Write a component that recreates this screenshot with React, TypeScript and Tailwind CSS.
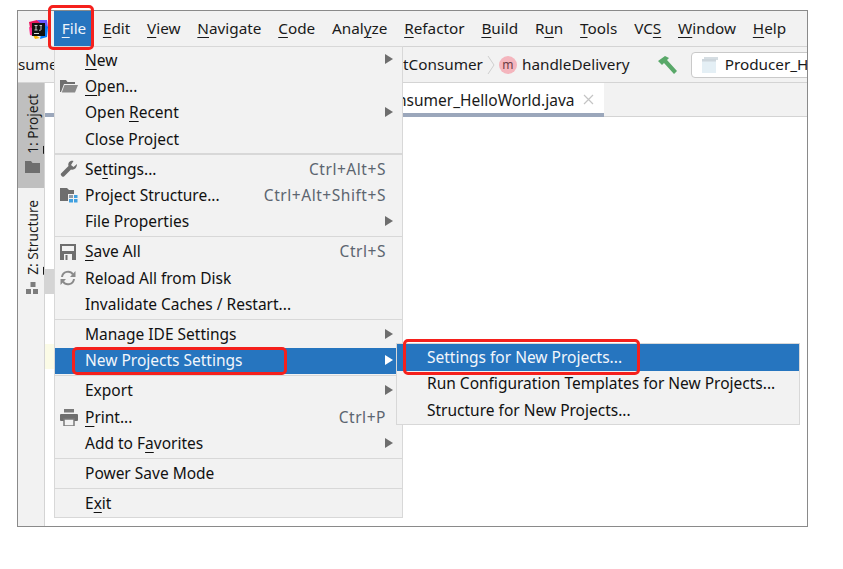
import React from "react";

function U({ c }: { c: string }) {
  return <span className="underline decoration-1 underline-offset-[3px]">{c}</span>;
}

function Row({
  children,
  icon,
  shortcut,
  arrow,
  active,
}: {
  children: React.ReactNode;
  icon?: React.ReactNode;
  shortcut?: string;
  arrow?: boolean;
  active?: boolean;
}) {
  return (
    <div
      className={`flex h-[26.33px] items-center whitespace-nowrap pl-[5px] ${arrow ? "pr-[9px]" : "pr-[16px]"} ${
        active ? "bg-[#2675bf] text-[#f2f6fb]" : "text-[#111111]"
      }`}
    >
      <span className="flex w-[25px] shrink-0 items-center justify-start">{icon}</span>
      <span className="flex-1">{children}</span>
      {shortcut && <span className="tracking-[0.55px] text-[#5c6570]">{shortcut}</span>}
      {arrow && (
        <svg width="8" height="10" viewBox="0 0 8 10" className="-mt-[2px] shrink-0">
          <path d="M0 0 L8 5 L0 10Z" fill={active ? "#ffffff" : "#6e6e6e"} />
        </svg>
      )}
    </div>
  );
}

function Sep({ thick }: { thick?: boolean }) {
  return (
    <div className="flex h-[3.7px] items-center">
      <div className={`w-full bg-[#d8d8d8] ${thick ? "h-[2px]" : "h-[1px]"}`} />
    </div>
  );
}

const Logo = () => (
  <svg width="20" height="20" viewBox="0 0 20 20">
    <path d="M1 3 L9 1 L13 4 L6 10 L2 9Z" fill="#e8175d" />
    <path d="M9 1 L19 1 L20 9 L14 6Z" fill="#6b57ff" />
    <path d="M15 5 L20 8 L19 18 L12 20Z" fill="#087cfa" />
    <path d="M1 8 L7 10 L6 17 L2 16Z" fill="#ff318c" />
    <path d="M4 14 L12 19 L7 20Z" fill="#fdb60d" />
    <rect x="4" y="4" width="13" height="13" fill="#111" />
    <rect x="6" y="14" width="5" height="1" fill="#ddd" />
    <path d="M6.5 6.5h3M8 6.5v4.5M6.5 11h3M11.5 6.5h2.5M13 6.5v4c0 .7-.8 1-2 .7" stroke="#ddd" strokeWidth="0.9" fill="none" />
  </svg>
);

const menuItems: [string, number][] = [
  ["Edit", 0],
  ["View", 0],
  ["Navigate", 0],
  ["Code", 0],
  ["Analyze", 4],
  ["Refactor", 0],
  ["Build", 0],
  ["Run", 1],
  ["Tools", 0],
  ["VCS", 2],
  ["Window", 0],
  ["Help", 0],
];

export default function App() {
  return (
    <div className="relative h-[569px] w-[843px] overflow-hidden bg-white pl-[17px] pt-[10px] font-['Noto_Sans','Open_Sans',sans-serif] text-[15.3px]">
      {/* Window */}
      <div className="flex h-[517px] w-[791px] flex-col overflow-hidden border border-[#8a8a8a] bg-white">
        {/* Menu bar */}
        <div className="flex h-[36px] shrink-0 items-stretch border-b border-[#d4d4d4] bg-[#f2f2f2] text-[#1a1a1a]">
          <span className="flex w-[36px] items-center justify-center pl-[4px]"><Logo /></span>
          <div className="flex w-[40px] items-center justify-center bg-[#2675bf] text-[#eef4fa]">
            <span><U c="F" />ile</span>
          </div>
          <div className="flex items-center pl-[0.5px] whitespace-nowrap">
            {menuItems.map(([t, i]) => (
              <span key={t} className="px-[8.4px]">
                {t.slice(0, i)}
                <U c={t[i]} />
                {t.slice(i + 1)}
              </span>
            ))}
          </div>
        </div>
        {/* Breadcrumb */}
        <div className="flex h-[36px] shrink-0 items-center overflow-hidden whitespace-nowrap border-b border-[#d4d4d4] bg-[#f2f2f2] text-[#1a1a1a]">
          <span className="w-[385px] shrink-0">sume</span>
          <span className="shrink-0">tConsumer</span>
          <svg width="8" height="20" viewBox="0 0 8 20" className="ml-[4px] shrink-0">
            <path d="M1 1 L7 10 L1 19" stroke="#cfcfcf" fill="none" />
          </svg>
          <span className="ml-[4px] flex h-[18px] w-[18px] shrink-0 items-center justify-center rounded-full bg-[#f4b5bd] text-[12px] leading-none text-[#6b3b44]">m</span>
          <span className="ml-[5px] shrink-0">handleDelivery</span>
          <svg width="22" height="20" viewBox="0 0 22 20" className="ml-[27px] shrink-0">
            <path d="M1 6 L8 1 L12 3 L10 5 L20 16 L17 19 L7 8 L5 10Z" fill="#59a869" />
          </svg>
          <div className="ml-[12px] flex h-[26px] w-[140px] shrink-0 items-center rounded-[4px] border border-[#c9c9c9] bg-white pl-[9px]">
            <svg width="18" height="18" viewBox="0 0 18 18" className="shrink-0">
              <rect x="3" y="1" width="14" height="3" fill="#d5dde2" />
              <rect x="1" y="3" width="14" height="14" fill="#e4eff5" />
              <rect x="1" y="3" width="14" height="2.5" fill="#cdd6dc" />
            </svg>
            <span className="ml-[6px]">Producer_H</span>
          </div>
        </div>
        {/* Body */}
        <div className="flex min-h-0 flex-1">
          {/* Left tool strip */}
          <div className="w-[27px] shrink-0 border-r border-[#d4d4d4] bg-[#f2f2f2] text-[13.7px] text-[#1a1a1a]">
            <div className="flex h-[105px] flex-col items-center bg-[#bfbfbf] pl-[3px] pt-[11px]">
              <span className="rotate-180 leading-none [writing-mode:vertical-rl]">
                <U c="1" />: Project
              </span>
              <svg width="15" height="12" viewBox="0 0 15 12" className="mt-[7px]">
                <path d="M0 0 H6 L7.5 2 H15 V12 H0Z" fill="#6e6e6e" />
              </svg>
            </div>
            <div className="flex flex-col items-center pl-[3px] pt-[12px]">
              <span className="rotate-180 leading-none [writing-mode:vertical-rl]">
                <U c="Z" />: Structure
              </span>
              <svg width="14" height="12" viewBox="0 0 14 12" className="mt-[7px]">
                <rect x="4.5" y="0" width="5" height="5" fill="#7d7d7d" />
                <rect x="0" y="7" width="5" height="5" fill="#7d7d7d" />
                <rect x="7" y="7" width="5" height="5" fill="#7d7d7d" />
              </svg>
            </div>
          </div>
          {/* Editor */}
          <div className="flex min-w-0 flex-1 flex-col">
            <div className="flex h-[34px] shrink-0 border-b border-[#d4d4d4] bg-[#f2f2f2]">
              <div className="flex h-[34px] w-[559px] items-center whitespace-nowrap border-b-[4px] border-[#9ba7bb] bg-white pl-[352px] pt-[5px] text-[15.5px] text-[#1a1a1a]">
                <span>nsumer_HelloWorld.java</span>
                <svg width="12" height="12" viewBox="0 0 12 12" className="-mt-[2px] ml-[8px]">
                  <path d="M1 1 L10 10 M10 1 L1 10" stroke="#c4c4c4" strokeWidth="1.2" />
                </svg>
              </div>
            </div>
            <div className="flex-1 bg-white">
              <div className="w-[9px] pt-[152px]">
                <div className="h-[25px] bg-[#d4d4d4]" />
                <div className="mt-[50px] h-[25px] bg-[#fbfbe6]" />
              </div>
            </div>
          </div>
        </div>
      </div>

      {/* File menu */}
      <div className="absolute left-[54px] top-[46px] w-[349px] border border-[#d8d8d8] bg-[#f2f2f2] text-[15.5px]">
        <Row arrow><U c="N" />ew</Row>
        <Row icon={
          <svg width="18" height="14" viewBox="0 0 18 14"><path d="M0 1 H6 L7.5 3 H15 V5 H4 L1 13 H0Z" fill="#6e6e6e" /><path d="M4.5 6 H18 L15 13.5 H1.8Z" fill="#8a8a8a" /></svg>
        }><U c="O" />pen...</Row>
        <Row arrow>Open <U c="R" />ecent</Row>
        <Row>Close Project</Row>
        <Sep thick />
        <Row shortcut="Ctrl+Alt+S" icon={
          <svg width="18" height="18" viewBox="0 0 18 18"><path d="M17 4 L13.5 7 L11 5 L13.5 1 C10 0 7.5 3 8.5 6 L1 13.5 C0 15 2.5 17.5 4 16.5 L11 9.5 C14 10.5 17 8 17 4Z" fill="#6e6e6e" /></svg>
        }>Se<U c="t" />tings...</Row>
        <Row shortcut="Ctrl+Alt+Shift+S" icon={
          <svg width="18" height="16" viewBox="0 0 18 16"><path d="M0 1 H7 L9 3 H14 V7 H8 V14 H0Z" fill="#6e6e6e" /><rect x="9" y="8" width="4" height="3" fill="#8e9aa6" /><rect x="14" y="8" width="3.5" height="3" fill="#40a0e0" /><rect x="9" y="12" width="4" height="3.5" fill="#40a0e0" /><rect x="14" y="12" width="3.5" height="3.5" fill="#40a0e0" /></svg>
        }>Project Structure...</Row>
        <Row arrow>File Properties</Row>
        <Sep />
        <Row shortcut="Ctrl+S" icon={
          <svg width="16" height="16" viewBox="0 0 16 16"><path d="M0 0 H16 V16 H0Z" fill="#6e6e6e" /><rect x="2" y="2" width="12" height="5" fill="#f2f2f2" /><rect x="4" y="10" width="8" height="6" fill="#f2f2f2" /><rect x="5.5" y="11" width="2" height="5" fill="#6e6e6e" /></svg>
        }><U c="S" />ave All</Row>
        <Row icon={
          <svg width="16" height="16" viewBox="0 0 16 16" fill="none" stroke="#8a8a8a" strokeWidth="2"><path d="M2 7 A6 6 0 0 1 13 4.5" /><path d="M14 9 A6 6 0 0 1 3 11.5" /><path d="M15.5 1 V7 H10Z" fill="#8a8a8a" stroke="none" /><path d="M0.5 15 V9 H6Z" fill="#8a8a8a" stroke="none" /></svg>
        }>Reload All from Disk</Row>
        <Row>Invalidate Caches / Restart...</Row>
        <Sep />
        <Row arrow>Manage IDE Settings</Row>
        <Row arrow active>New Projects Settings</Row>
        <Sep />
        <Row arrow>Export</Row>
        <Row shortcut="Ctrl+P" icon={
          <svg width="18" height="17" viewBox="0 0 18 17"><rect x="4" y="0" width="10" height="3.5" fill="#7a7a7a" /><rect x="0" y="5" width="18" height="7" rx="1" fill="#6e6e6e" /><rect x="4" y="10" width="10" height="7" fill="#f2f2f2" stroke="#7a7a7a" strokeWidth="1.5" /></svg>
        }><U c="P" />rint...</Row>
        <Row arrow>Add to F<U c="a" />vorites</Row>
        <Sep />
        <Row>Power Save Mode</Row>
        <Sep />
        <Row>E<U c="x" />it</Row>
      </div>

      {/* Submenu */}
      <div className="absolute left-[396px] top-[343px] flex w-[404px] flex-col border border-[#d8d8d8] bg-[#f2f2f2] text-[15.5px] whitespace-nowrap">
        <div className="flex h-[26.6px] items-center bg-[#2675bf] pl-[30px] text-[#f2f6fb]">Settings for New Projects...</div>
        <div className="flex h-[26.6px] items-center pl-[30px] text-[#111111]">Run Configuration Templates for New Projects...</div>
        <div className="flex h-[26.6px] items-center pl-[30px] text-[#111111]">Structure for New Projects...</div>
      </div>

      {/* Red annotations */}
      <div className="absolute left-[48px] top-[5px] h-[45px] w-[46px] rounded-[5px] border-[3px] border-[#f5201c]" />
      <div className="absolute left-[72px] top-[347px] h-[28px] w-[215px] rounded-[5px] border-[3px] border-[#f5201c]" />
      <div className="absolute left-[403px] top-[339px] h-[36px] w-[237px] rounded-[5px] border-[3px] border-[#f5201c]" />
    </div>
  );
}
